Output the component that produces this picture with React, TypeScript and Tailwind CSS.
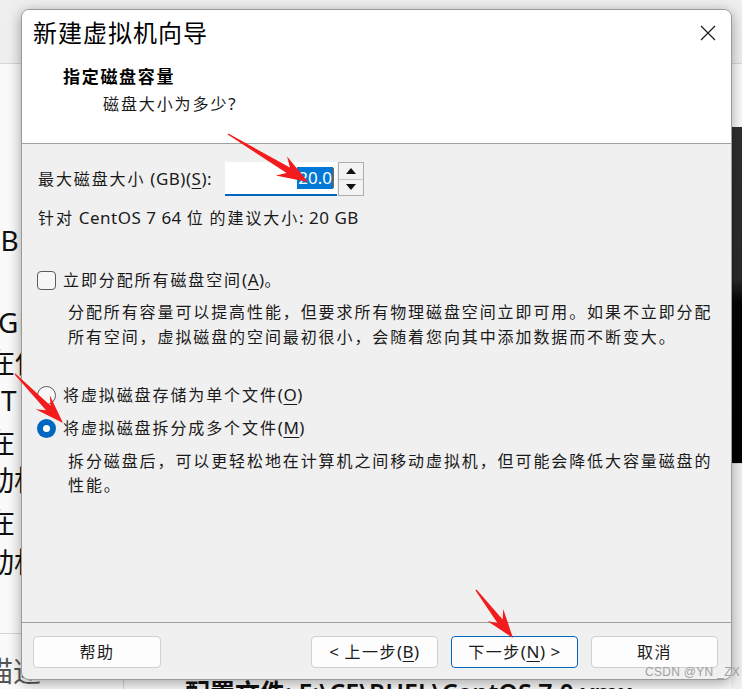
import React from 'react';

// red annotation arrow, tail -> tip
function arrowPoints(x1: number, y1: number, x2: number, y2: number, head = 26, hw = 11) {
  const len = Math.hypot(x2 - x1, y2 - y1);
  const ux = (x2 - x1) / len;
  const uy = (y2 - y1) / len;
  const nx = -uy;
  const ny = ux;
  const bx = x2 - ux * head;
  const by = y2 - uy * head;
  const sw = 3.2;
  const back = 5;
  const pts = [
    [x1 + nx * 0.6, y1 + ny * 0.6],
    [bx + ux * 3 + nx * sw, by + uy * 3 + ny * sw],
    [bx - ux * back + nx * hw, by - uy * back + ny * hw],
    [x2, y2],
    [bx - ux * back - nx * hw, by - uy * back - ny * hw],
    [bx + ux * 3 - nx * sw, by + uy * 3 - ny * sw],
    [x1 - nx * 0.6, y1 - ny * 0.6],
  ];
  return pts.map((p) => p.map((v) => v.toFixed(1)).join(',')).join(' ');
}

function U({ children }: { children: React.ReactNode }) {
  return <span className="underline underline-offset-[3px] decoration-1">{children}</span>;
}

function Latin({ children }: { children: React.ReactNode }) {
  return <span className="text-[17px] tracking-[0.5px]">{children}</span>;
}

function Radio({ checked }: { checked?: boolean }) {
  if (checked) {
    return (
      <span className="w-[19px] h-[19px] rounded-full bg-[#0067c0] flex items-center justify-center shrink-0">
        <span className="w-[7px] h-[7px] rounded-full bg-white" />
      </span>
    );
  }
  return <span className="w-[19px] h-[19px] rounded-full border border-[#5c5c5c] bg-[#f7f7f7] shrink-0" />;
}

function FooterButton({ children, primary }: { children: React.ReactNode; primary?: boolean }) {
  return (
    <button
      className={`w-[127px] h-[32px] rounded-[4px] bg-[#fdfdfd] text-[16px] tracking-[1.5px] text-[#1b1b1b] border ${
        primary ? 'border-[#0067c0]' : 'border-[#d0d0d0]'
      }`}
    >
      {children}
    </button>
  );
}

export default function App() {
  const bgText = 'absolute text-[28px] leading-none text-[#111] whitespace-nowrap';

  return (
    <div className="relative w-[742px] h-[689px] overflow-hidden bg-[#fafafa] font-['Noto_Sans','Noto_Sans_CJK_SC',sans-serif]">
      {/* window behind the dialog */}
      <div className="h-[64px] bg-[#efefef] border-b border-[#d6d6d6]" />
      <div className="absolute left-[731px] top-[127px] w-[11px] h-[336px] bg-[linear-gradient(to_bottom,#2e2e2e_0%,#2b2b2b_45%,#050505_52%,#000_100%)]" />
      <div className="absolute left-[731px] top-[463px] w-[11px] h-[226px] bg-[#f0f0f0] border-t border-[#d8d8d8]" />
      <div className="absolute left-0 top-[633px] w-[22px] h-[1px] bg-[#d4d4d4]" />
      <div className="absolute left-[123px] top-[672px] w-[1px] h-[17px] bg-[#d4d4d4]" />

      <span className={`${bgText} left-[-20px] top-[226px]`}>GB</span>
      <span className={`${bgText} left-[-2px] top-[308px]`}>GB</span>
      <span className={`${bgText} left-[-13px] top-[348px]`}>在使用</span>
      <span className={`${bgText} left-[1px] top-[386px]`}>T</span>
      <span className={`${bgText} left-[-13px] top-[428px]`}>在</span>
      <span className={`${bgText} left-[-14px] top-[466px]`}>动机</span>
      <span className={`${bgText} left-[-13px] top-[508px]`}>在</span>
      <span className={`${bgText} left-[-14px] top-[548px]`}>动机</span>
      <span className={`${bgText} left-[-15px] top-[657px] text-[#555]`}>描述</span>
      <span className="absolute left-[185px] top-[680px] text-[25px] leading-none font-semibold text-[#111] whitespace-nowrap">
        配置文件: E:\CE\RHEL\CentOS 7.0.vmx
      </span>

      {/* dialog window */}
      <div className="absolute left-[21px] top-[9px] w-[711px] h-[671px] rounded-[8px] border border-[#9a9a9a] bg-[#f0f0f0] shadow-[0_3px_14px_rgba(0,0,0,0.35)] overflow-hidden flex flex-col text-[#1a1a1a]">
        {/* title + header */}
        <div className="h-[134px] shrink-0 bg-white border-b border-[#a0a0a0]">
          <div className="h-[46px] flex items-center justify-between pl-[11px] pr-[15px]">
            <span className="text-[24px] leading-none tracking-[1px] text-black">新建虚拟机向导</span>
            <svg width="16" height="16" viewBox="0 0 16 16" className="mt-[-1px]">
              <path d="M1 1 L15 15 M15 1 L1 15" stroke="#1a1a1a" strokeWidth="1.2" fill="none" />
            </svg>
          </div>
          <div className="pl-[41px] pt-[9px] text-[17px] leading-[24px] font-bold tracking-[1.7px] text-black">
            指定磁盘容量
          </div>
          <div className="pl-[81px] mt-[3px] text-[16px] leading-[24px] tracking-[1.9px]">
            磁盘大小为多少<Latin>?</Latin>
          </div>
        </div>

        {/* body */}
        <div className="flex-1 flex flex-col pt-[18px] text-[16px] tracking-[1.9px]">
          <div className="flex items-center h-[34px] pl-[16px]">
            <span className="w-[187px] whitespace-nowrap">
              最大磁盘大小<Latin> (GB)(<U>S</U>):</Latin>
            </span>
            <div className="relative w-[112px] h-[34px] bg-white border-b-2 border-[#0067c0] flex items-center justify-end pr-[3px]">
              <span className="bg-[#0078d7] text-white text-[17px] leading-[22px] tracking-normal px-[1px]">20.0</span>
              <span className="w-[1px] h-[20px] bg-[#b55a00]" />
            </div>
            <div className="ml-[1px] w-[26px] h-[34px] border border-[#adadad] flex flex-col">
              <div className="flex-1 bg-[#f3f3f3] border-b border-[#c6c6c6] flex items-center justify-center">
                <svg width="10" height="6" viewBox="0 0 10 6">
                  <path d="M0 6 L5 0 L10 6 Z" fill="#111" />
                </svg>
              </div>
              <div className="flex-1 bg-[#f3f3f3] flex items-center justify-center">
                <svg width="10" height="6" viewBox="0 0 10 6">
                  <path d="M0 0 L10 0 L5 6 Z" fill="#111" />
                </svg>
              </div>
            </div>
          </div>

          <div className="mt-[10px] pl-[16px] leading-[24px] whitespace-nowrap">
            针对<Latin> CentOS 7 64 </Latin>位<Latin> </Latin>的建议大小<Latin>: 20 GB</Latin>
          </div>

          <div className="mt-[38px] pl-[15px] h-[24px] flex items-center gap-[7px]">
            <span className="w-[19px] h-[19px] rounded-[4px] border border-[#5c5c5c] bg-[#f7f7f7] shrink-0" />
            <span className="whitespace-nowrap">
              立即分配所有磁盘空间<Latin>(<U>A</U>)</Latin>。
            </span>
          </div>
          <p className="mt-[8px] pl-[46px] leading-[25px] whitespace-nowrap">
            分配所有容量可以提高性能，但要求所有物理磁盘空间立即可用。如果不立即分配
            <br />
            所有空间，虚拟磁盘的空间最初很小，会随着您向其中添加数据而不断变大。
          </p>

          <div className="mt-[33px] pl-[15px] h-[24px] flex items-center gap-[7px]">
            <Radio />
            <span className="whitespace-nowrap">
              将虚拟磁盘存储为单个文件<Latin>(<U>O</U>)</Latin>
            </span>
          </div>
          <div className="mt-[9px] pl-[15px] h-[24px] flex items-center gap-[7px]">
            <Radio checked />
            <span className="whitespace-nowrap">
              将虚拟磁盘拆分成多个文件<Latin>(<U>M</U>)</Latin>
            </span>
          </div>
          <p className="mt-[9px] pl-[46px] leading-[24px] whitespace-nowrap">
            拆分磁盘后，可以更轻松地在计算机之间移动虚拟机，但可能会降低大容量磁盘的
            <br />
            性能。
          </p>
        </div>

        {/* footer */}
        <div className="h-[57px] shrink-0 border-t border-[#a0a0a0] flex items-start pt-[13px] pl-[11px] pr-[13px]">
          <button className="w-[128px] h-[32px] rounded-[4px] bg-[#fdfdfd] border border-[#d0d0d0] text-[16px] tracking-[1.5px] text-[#1b1b1b]">
            帮助
          </button>
          <div className="flex-1" />
          <div className="flex gap-[13px]">
            <FooterButton>
              <Latin>&lt; </Latin>上一步<Latin>(<U>B</U>)</Latin>
            </FooterButton>
            <FooterButton primary>
              下一步<Latin>(<U>N</U>) &gt;</Latin>
            </FooterButton>
            <FooterButton>取消</FooterButton>
          </div>
        </div>
      </div>

      {/* watermark */}
      <span className="absolute left-[645px] top-[665px] text-[12px] leading-[14px] text-[#a0a0a0] tracking-[0.3px] font-['Liberation_Sans',sans-serif]">
        CSDN @YN _ZX
      </span>

      {/* annotation arrows */}
      <svg className="absolute inset-0 pointer-events-none" width="742" height="689">
        <polygon points={arrowPoints(228, 134, 308, 182)} fill="#f31b1b" />
        <polygon points={arrowPoints(15, 374, 63, 423, 24, 10)} fill="#f31b1b" />
        <polygon points={arrowPoints(476, 590, 513, 638, 24, 10)} fill="#f31b1b" />
      </svg>
    </div>
  );
}
